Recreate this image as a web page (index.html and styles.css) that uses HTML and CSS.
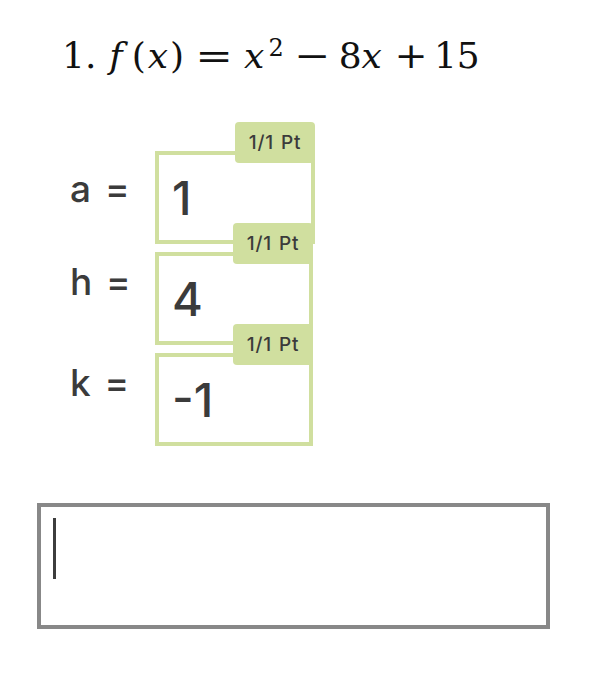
FILE: index.html
```html
<!DOCTYPE html>
<html lang="en">
<head>
<meta charset="utf-8">
<title>Vertex form</title>
<link rel="stylesheet" href="styles.css">
</head>
<body>
<div class="page">
  <div class="eq"><span class="num lead">1.</span><span class="mi f">f</span><span class="mo">(</span><span class="mi arg">x</span><span class="mo">)</span><span class="op op--eq">=</span><span class="mi">x</span><span class="sup">2</span><span class="op op--minus">−</span><span class="num">8</span><span class="mi">x</span><span class="op op--plus">+</span><span class="num">15</span></div>

  <div class="rows">
    <div class="row">
      <div class="label label--a">a =</div>
      <div class="box box--wide">
        <span class="badge">1/1 Pt</span>
        <span class="value">1</span>
      </div>
    </div>
    <div class="row">
      <div class="label">h =</div>
      <div class="box">
        <span class="badge">1/1 Pt</span>
        <span class="value">4</span>
      </div>
    </div>
    <div class="row">
      <div class="label">k =</div>
      <div class="box">
        <span class="badge">1/1 Pt</span>
        <span class="value">-1</span>
      </div>
    </div>
  </div>

  <div class="answer"><span class="caret"></span></div>
</div>
</body>
</html>
```

FILE: styles.css
```css
html, body {
  margin: 0;
  padding: 0;
  background: #ffffff;
}

.page {
  width: 596px;
  height: 682px;
  overflow: hidden;
  font-family: Inter, "Open Sans", sans-serif;
  color: #3b3b3b;
}

/* ---------- equation ---------- */
.eq {
  margin: 37px 0 0 62px;
  font-family: "DejaVu Serif", "Liberation Serif", serif;
  font-size: 36px;
  line-height: 38px;
  color: #111111;
  white-space: nowrap;
}

.eq span { display: inline-block; }
.eq .num { font-style: normal; }
.eq .mi { font-style: italic; }
.eq .mo { font-style: normal; }
.eq .lead { margin-right: 13px; }
.eq .f { margin-right: 9px; }
.eq .arg { margin: 0 2px; }
.eq .op {
  width: 30px;
  text-align: center;
}
.eq .op--eq { margin: 0 15px 0 15px; transform: scaleX(1.25); }
.eq .op--minus { margin: 0 12px 0 13px; transform: scaleX(1.2); }
.eq .op--plus { margin: 0 8px 0 14px; transform: scaleX(1.1); }
.eq .sup {
  font-size: 24px;
  line-height: 0;
  vertical-align: 12px;
  margin-left: 4px;
}

/* ---------- rows ---------- */
.rows {
  margin: 76px 0 0 70px;
  display: flex;
  flex-direction: column;
  gap: 8px;
}

.row {
  display: flex;
  align-items: flex-start;
}

.label {
  width: 85px;
  font-size: 37px;
  font-weight: 500;
  line-height: 38px;
  padding-top: 11px;
  word-spacing: 4px;
  white-space: nowrap;
}

.label--a { padding-top: 19px; }

.box {
  position: relative;
  box-sizing: border-box;
  width: 158px;
  height: 93px;
  border: 4px solid #d0df9f;
  padding: 19px 0 0 13px;
}

.box--wide { width: 160px; }

.value {
  display: block;
  font-size: 47px;
  font-weight: 500;
  line-height: 48px;
  color: #3b3b3b;
}

.badge {
  position: absolute;
  top: -33px;
  right: -4px;
  width: 80px;
  height: 41px;
  box-sizing: border-box;
  background: #d0df9f;
  border-radius: 4px;
  font-size: 19px;
  font-weight: 500;
  letter-spacing: 0.8px;
  word-spacing: 1px;
  line-height: 41px;
  text-align: center;
  color: #3b3b3b;
}

/* ---------- answer box ---------- */
.answer {
  box-sizing: border-box;
  margin: 57px 0 0 37px;
  width: 513px;
  height: 126px;
  border: 4px solid #888888;
  padding: 11px 0 0 12px;
}

.caret {
  display: block;
  width: 3px;
  height: 61px;
  background: #3d3d3d;
}
```
